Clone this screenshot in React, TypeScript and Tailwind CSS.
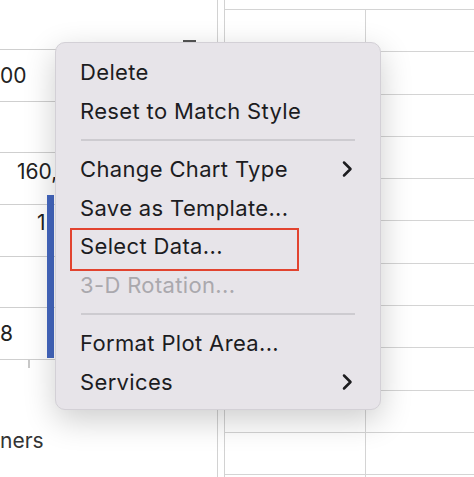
import React from "react"

const font = { fontFamily: "Inter, 'Noto Sans', 'Liberation Sans', sans-serif" }

function Chevron() {
  return (
    <svg width="12" height="18" viewBox="0 0 12 18" fill="none" className="shrink-0">
      <path d="M3 2.5 L9.5 9 L3 15.5" stroke="#1c1c1f" strokeWidth="2.5" strokeLinecap="round" strokeLinejoin="round" />
    </svg>
  )
}

function MenuItem({
  label,
  submenu,
  disabled,
  highlighted,
}: {
  label: string
  submenu?: boolean
  disabled?: boolean
  highlighted?: boolean
}) {
  return (
    <div className="relative flex h-[38.5px] items-center justify-between pl-[24px] pr-[27px]">
      <span className={disabled ? "text-[#aaa8ad]" : "text-[#1c1c1f]"}>{label}</span>
      {submenu && <Chevron />}
      {highlighted && (
        <div className="pointer-events-none absolute left-[14px] top-[1px] h-[43px] w-[229px] border-2 border-[#e2432f]" />
      )}
    </div>
  )
}

function Separator() {
  return (
    <div className="flex h-[20px] items-center px-[25px]">
      <div className="h-[1.5px] w-full bg-[#cdcbd0]" />
    </div>
  )
}

function LeftChart() {
  const rows = [
    { text: "00", cls: "pl-0 items-center" },
    { text: "", cls: "" },
    { text: "160,", cls: "pl-[17px] items-start pt-[8px]" },
    { text: "1", cls: "pl-[37px] items-start pt-[7px]" },
    { text: "", cls: "" },
    { text: "8", cls: "pl-0 items-center" },
  ]
  return (
    <div className="relative w-[218px] shrink-0 border-r border-[#d2d2d2] text-[21px] text-[#222]">
      <div className="pt-[49px]">
        <div className="relative w-[70px]">
          {rows.map((r, i) => (
            <div key={i} className={`flex h-[51.7px] border-t border-[#cfcfcf] ${r.cls}`}>
              {r.text}
            </div>
          ))}
          <div className="border-t border-[#cfcfcf]" />
          {/* series bar */}
          <div className="absolute left-[47px] top-[146px] h-[163px] w-[7px] bg-[#4467c0]" />
        </div>
        <div className="ml-[28px] h-[8px] w-[1.5px] bg-[#c9c9c9]" />
        <div className="mt-[62px] text-[#333]">ners</div>
      </div>
      {/* handle under the menu edge */}
      <div className="absolute left-[183px] top-[40px] h-[2px] w-[13px] bg-[#555]" />
    </div>
  )
}

function RightGrid() {
  return (
    <div className="ml-[6px] flex-1 border-l border-[#d2d2d2] pt-[9px]">
      {Array.from({ length: 12 }).map((_, i) => (
        <div key={i} className="flex h-[42.3px] border-t border-[#d4d4d4]">
          <div className="w-[141px] border-r border-[#d4d4d4]" />
          <div className="flex-1" />
        </div>
      ))}
    </div>
  )
}

export default function App() {
  return (
    <div className="relative h-[477px] w-[474px] overflow-hidden bg-white leading-none" style={font}>
      <div className="flex h-full">
        <LeftChart />
        <RightGrid />
      </div>

      <div className="absolute left-[55px] top-[42px] w-[326px] rounded-[10px] border border-[#d3d0d6] bg-[#e7e4e9] pb-[8px] pt-[10px] text-[22px] tracking-[0.35px] shadow-[0_10px_32px_rgba(0,0,0,0.2)]">
        <MenuItem label="Delete" />
        <MenuItem label="Reset to Match Style" />
        <Separator />
        <MenuItem label="Change Chart Type" submenu />
        <MenuItem label="Save as Template..." />
        <MenuItem label="Select Data..." highlighted />
        <MenuItem label="3-D Rotation..." disabled />
        <Separator />
        <MenuItem label="Format Plot Area..." />
        <MenuItem label="Services" submenu />
      </div>
    </div>
  )
}
